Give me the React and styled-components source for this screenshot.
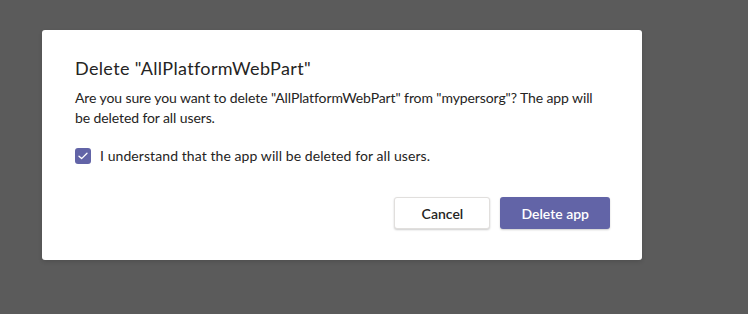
import React, { useState } from "react";
import styled, { createGlobalStyle } from "styled-components";

const GlobalStyle = createGlobalStyle`
  html, body {
    margin: 0;
    padding: 0;
    width: 100%;
    height: 100%;
    background: #5b5b5b;
  }
  #root {
    height: 100%;
  }
  * {
    box-sizing: border-box;
  }
`;

const Overlay = styled.div`
  display: flex;
  align-items: flex-start;
  width: 748px;
  height: 314px;
  padding: 30px 0 0 42px;
  background: #5b5b5b;
  font-family: "Segoe UI", Lato, sans-serif;
  color: #252423;
`;

const Dialog = styled.div`
  display: flex;
  flex-direction: column;
  width: 600px;
  height: 230px;
  padding: 26px 32px 31px 33px;
  background: #fff;
  border-radius: 3px;
  box-shadow: 0 2px 4px rgba(0, 0, 0, 0.12);
`;

const Title = styled.h2`
  margin: 0;
  font-size: 18px;
  line-height: 24px;
  font-weight: 400;
  letter-spacing: 0.35px;
`;

const Body = styled.p`
  margin: 8px 0 0;
  font-size: 14px;
  line-height: 20px;
  letter-spacing: -0.1px;
`;

const CheckRow = styled.label`
  display: flex;
  align-items: center;
  gap: 9px;
  margin-top: 18px;
  font-size: 14px;
  line-height: 20px;
  letter-spacing: 0.08px;
  cursor: pointer;
`;

const Box = styled.span`
  display: flex;
  align-items: center;
  justify-content: center;
  width: 16px;
  height: 16px;
  border-radius: 3px;
  background: ${(p) => (p.checked ? "#6264a7" : "#fff")};
  border: ${(p) => (p.checked ? "none" : "1px solid #605e5c")};
`;

const Actions = styled.div`
  display: flex;
  justify-content: flex-end;
  gap: 10px;
  margin-top: auto;
`;

const Button = styled.button`
  min-width: 96px;
  height: 32px;
  padding: 0 20px;
  font-family: inherit;
  font-size: 14px;
  font-weight: 600;
  border-radius: 3px;
  cursor: pointer;
  color: ${(p) => (p.primary ? "#fff" : "#252423")};
  background: ${(p) => (p.primary ? "#6264a7" : "#fff")};
  border: 1px solid ${(p) => (p.primary ? "transparent" : "#e1dfdd")};
  box-shadow: 0 1px 2px rgba(0, 0, 0, 0.2);
`;

export default function App() {
  const [checked, setChecked] = useState(true);

  return (
    <>
      <GlobalStyle />
      <Overlay>
        <Dialog>
          <Title>Delete "AllPlatformWebPart"</Title>
          <Body>
            Are you sure you want to delete "AllPlatformWebPart" from
            "mypersorg"? The app will be deleted for all users.
          </Body>
          <CheckRow onClick={() => setChecked(!checked)}>
            <Box checked={checked}>
              {checked && (
                <svg width="10" height="8" viewBox="0 0 10 8">
                  <path
                    d="M1 4.2 L3.6 6.6 L9 1.2"
                    fill="none"
                    stroke="#fff"
                    strokeWidth="1.3"
                    strokeLinecap="round"
                    strokeLinejoin="round"
                  />
                </svg>
              )}
            </Box>
            I understand that the app will be deleted for all users.
          </CheckRow>
          <Actions>
            <Button>Cancel</Button>
            <Button primary>Delete app</Button>
          </Actions>
        </Dialog>
      </Overlay>
    </>
  );
}
